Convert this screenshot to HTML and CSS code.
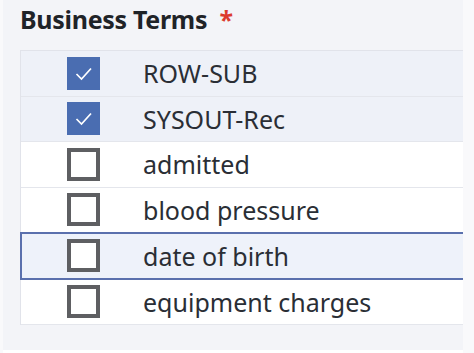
FILE: index.html
```html
<!DOCTYPE html>
<html>
<head>
<meta charset="utf-8">
<link rel="stylesheet" href="styles.css">
</head>
<body>
<div class="panel">
  <h2 class="title">Business Terms <span class="req">*</span></h2>
  <div class="list">
    <div class="row checked">
      <span class="box on"><svg viewBox="0 0 33 33" width="33" height="33"><path d="M9.5 17 L14.5 22 L24 11.5" fill="none" stroke="#fff" stroke-width="1.7"/></svg></span>
      <span class="label">ROW-SUB</span>
    </div>
    <div class="row checked">
      <span class="box on"><svg viewBox="0 0 33 33" width="33" height="33"><path d="M9.5 17 L14.5 22 L24 11.5" fill="none" stroke="#fff" stroke-width="1.7"/></svg></span>
      <span class="label">SYSOUT-Rec</span>
    </div>
    <div class="row">
      <span class="box"></span>
      <span class="label">admitted</span>
    </div>
    <div class="row">
      <span class="box"></span>
      <span class="label">blood pressure</span>
    </div>
    <div class="row focus">
      <span class="box"></span>
      <span class="label">date of birth</span>
    </div>
    <div class="row">
      <span class="box"></span>
      <span class="label">equipment charges</span>
    </div>
  </div>
</div>
</body>
</html>
```

FILE: styles.css
```css
html, body {
  margin: 0;
  padding: 0;
  background: #f9f9fb;
}
body {
  width: 474px;
  height: 353px;
  overflow: hidden;
  font-family: "Noto Sans", "Open Sans", sans-serif;
}
.panel {
  margin-left: 3px;
  width: 443px;
  height: 350px;
  padding-left: 17px;
  background: #f3f4f8;
  box-sizing: content-box;
  border-bottom: 3px solid #ffffff;
}
.title {
  margin: 0;
  height: 50px;
  padding-top: 2px;
  box-sizing: border-box;
  font-size: 25px;
  letter-spacing: -0.3px;
  font-weight: 700;
  color: #1f2328;
  line-height: 34px;
}
.req {
  color: #dc3b2e;
  margin-left: 6px;
}
.list {
  display: flex;
  flex-direction: column;
  border-top: 1px solid #e1e3ea;
  border-left: 1px solid #e1e3ea;
}
.row {
  height: 44.5px;
  display: flex;
  align-items: center;
  background: #ffffff;
  border-bottom: 1px solid #e4e6ec;
  box-sizing: content-box;
}
.row.checked {
  background: #eef1f8;
}
.row.focus {
  background: #eef2fa;
  border-top: 2px solid #5a70ad;
  border-bottom: 2px solid #5a70ad;
  border-left: 2px solid #5a70ad;
  margin-left: -1px;
  margin-top: -1px;
  height: 43.5px;
}
.box {
  width: 33px;
  height: 33px;
  margin-left: 46px;
  box-sizing: border-box;
  border: 4px solid #5e5f62;
  background: #ffffff;
  flex: none;
}
.row.focus .box {
  margin-left: 45px;
}
.box.on {
  border: none;
  background: #4a6db1;
}
.box svg {
  display: block;
}
.label {
  margin-left: 43px;
  font-size: 25px;
  color: #2a2e35;
  line-height: 30px;
}
```
